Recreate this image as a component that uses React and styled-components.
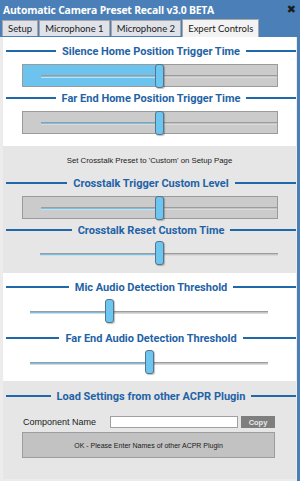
import React from 'react'
import styled, { createGlobalStyle } from 'styled-components'

const GlobalStyle = createGlobalStyle`
    html, body {
        margin: 0;
        padding: 0;
        background: #4a80b7;
    }
    * {
        box-sizing: border-box;
    }
`

const tabs = ['Setup', 'Microphone 1', 'Microphone 2', 'Expert Controls']

function Header({ children, mt = 0 }) {
    return (
        <HeaderRow mt={mt}>
            <Rule />
            <HeaderText>{children}</HeaderText>
            <Rule />
        </HeaderRow>
    )
}

function Slider({ boxed, filled, value, left, right, mt }) {
    // position of the thumb centre along the track
    const pos = `calc(${left}px + (100% - ${left + right}px) * ${value / 100})`
    return (
        <SliderBox boxed={boxed} mt={mt}>
            {filled && <Fill style={{ width: pos }} />}
            <Track left={left} right={right}>
                <TrackOn style={{ width: `${value}%` }} />
            </Track>
            <Thumb style={{ left: `calc(${pos} - 4px)` }} />
        </SliderBox>
    )
}

function App() {
    return (
        <Window>
            <GlobalStyle />
            <TitleBar>
                <Title>Automatic Camera Preset Recall v3.0 BETA</Title>
                <Close>✖</Close>
            </TitleBar>
            <Tabs>
                {tabs.map((t, i) =>
                    <Tab key={t} active={i === 3}>{t}</Tab>
                )}
            </Tabs>
            <Content>
                <Panel white pt={4} pb={12}>
                    <Header>Silence Home Position Trigger Time</Header>
                    <Slider boxed filled value={50} left={18} right={0} mt={3} />
                    <Header mt={1}>Far End Home Position Trigger Time</Header>
                    <Slider boxed value={50} left={18} right={0} mt={3} />
                </Panel>
                <Panel pt={8} pb={7}>
                    <Note>Set Crosstalk Preset to 'Custom' on Setup Page</Note>
                    <Header mt={5}>Crosstalk Trigger Custom Level</Header>
                    <Slider boxed value={50} left={18} right={0} mt={3} />
                    <Header mt={1}>Crosstalk Reset Custom Time</Header>
                    <Slider value={50} left={18} right={0} mt={2} />
                </Panel>
                <Panel white pt={4} pb={6}>
                    <Header>Mic Audio Detection Threshold</Header>
                    <Slider value={33} left={8} right={10} mt={3} />
                    <Header mt={4}>Far End Audio Detection Threshold</Header>
                    <Slider value={50} left={8} right={10} mt={3} />
                </Panel>
                <Panel grow pt={5} pb={0}>
                    <Header>Load Settings from other ACPR Plugin</Header>
                    <FormRow>
                        <Label>Component Name</Label>
                        <NameInput />
                        <CopyButton>Copy</CopyButton>
                    </FormRow>
                    <Status>OK - Please Enter Names of other ACPR Plugin</Status>
                </Panel>
            </Content>
        </Window>
    )
}

export default App

const Window = styled.div`
    width: 300px;
    height: 481px;
    background: #4a80b7;
    display: flex;
    flex-direction: column;
    overflow: hidden;
`

const TitleBar = styled.div`
    height: 19px;
    flex-shrink: 0;
    display: flex;
    align-items: center;
    justify-content: space-between;
    padding: 0 4px 0 3px;
`

const Title = styled.div`
    color: #ffffff;
    font-family: "Open Sans", sans-serif;
    font-weight: 700;
    font-size: 10.4px;
    letter-spacing: -0.2px;
`

const Close = styled.div`
    color: #1c1c1c;
    font-family: "DejaVu Sans", sans-serif;
    font-size: 11px;
    font-weight: 700;
`

const Tabs = styled.div`
    display: flex;
    align-items: flex-end;
    gap: 1px;
    height: 18px;
    flex-shrink: 0;
    padding-left: 2px;
`

const Tab = styled.div`
    height: ${props => props.active ? '18px' : '16px'};
    padding: 0 ${props => props.active ? '5px' : '5px'};
    display: flex;
    align-items: center;
    background: ${props => props.active ? '#f3f3f3' : '#dfe2e8'};
    border: 1px solid #a7a7a7;
    border-bottom: none;
    color: #202020;
    font-family: Lato, sans-serif;
    font-size: 9.5px;
    margin-bottom: ${props => props.active ? '0' : '1px'};
`

const Content = styled.div`
    flex: 1;
    background: #ececec;
    margin-right: 3px;
    padding: 0 1px 0 3px;
    display: flex;
    flex-direction: column;
`

const Panel = styled.div`
    background: ${props => props.white ? '#ffffff' : '#e6e6e6'};
    padding: ${props => props.pt}px 0 ${props => props.pb}px;
    display: flex;
    flex-direction: column;
    flex-shrink: 0;
    flex-grow: ${props => props.grow ? 1 : 0};
    margin-bottom: ${props => props.grow ? '2px' : '0'};
`

const HeaderRow = styled.div`
    height: 20px;
    margin-top: ${props => props.mt}px;
    display: flex;
    align-items: center;
    gap: 6px;
    padding: 0 0 0 3px;
`

const Rule = styled.div`
    flex: 1;
    height: 2px;
    background: #1f68aa;
`

const HeaderText = styled.div`
    color: #1f63a6;
    font-family: Roboto, sans-serif;
    font-weight: 700;
    font-size: 11px;
    white-space: nowrap;
`

const SliderBox = styled.div`
    position: relative;
    margin: ${props => props.mt}px 18px 0 19px;
    height: ${props => props.boxed ? '23px' : '24px'};
    background: ${props => props.boxed ? '#cbcbcb' : 'transparent'};
    border: ${props => props.boxed ? '1px solid #9b9b9b' : 'none'};
`

const Fill = styled.div`
    position: absolute;
    left: 0;
    top: 0;
    bottom: 0;
    background: #6cc4ee;
`

const Track = styled.div`
    position: absolute;
    left: ${props => props.left}px;
    right: ${props => props.right}px;
    top: 50%;
    height: 3px;
    margin-top: -1px;
    background: #c4c4c4;
    border-top: 1px solid #9c9c9c;
    border-bottom: 1px solid #dadada;
`

const TrackOn = styled.div`
    height: 100%;
    background: #6cc4ee;
`

const Thumb = styled.div`
    position: absolute;
    top: -1px;
    width: 9px;
    height: 24px;
    border-radius: 3px;
    background: #6cc6f0;
    border: 1px solid #56748a;
    box-shadow: 1px 1px 1px rgba(0, 0, 0, 0.25);
`

const Note = styled.div`
    height: 14px;
    text-align: center;
    font-family: "Liberation Sans", Arial, sans-serif;
    font-size: 7.8px;
    color: #1a1a1a;
    line-height: 14px;
`

const FormRow = styled.div`
    display: flex;
    align-items: center;
    height: 12px;
    margin: 10px 0 0 20px;
`

const Label = styled.div`
    width: 87px;
    font-family: "Liberation Sans", Arial, sans-serif;
    font-size: 9px;
    color: #1a1a1a;
`

const NameInput = styled.input`
    width: 128px;
    height: 12px;
    border: 1px solid #a0a0a0;
    background: #ffffff;
    padding: 0;
`

const CopyButton = styled.div`
    width: 34px;
    height: 12px;
    margin-left: 3px;
    background: #7e7e7e;
    color: #e8e8e8;
    font-family: "Liberation Sans", Arial, sans-serif;
    font-size: 7.5px;
    font-weight: 700;
    display: flex;
    align-items: center;
    justify-content: center;
`

const Status = styled.div`
    margin: 4px 21px 0 19px;
    height: 26px;
    background: #c2c2c2;
    border: 1px solid #9d9d9d;
    display: flex;
    align-items: center;
    justify-content: center;
    font-family: "Liberation Sans", Arial, sans-serif;
    font-size: 7px;
    color: #1a1a1a;
`
